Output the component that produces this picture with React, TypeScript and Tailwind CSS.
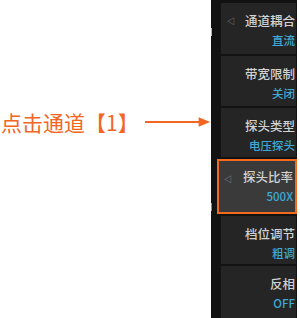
const items = [
  { title: '通道耦合', value: '直流', arrow: true, h: 'h-[51px]' },
  { title: '带宽限制', value: '关闭', arrow: false, h: 'h-[51px]' },
  { title: '探头类型', value: '电压探头', arrow: false, h: 'h-[49px]' },
  { title: '探头比率', value: '500X', arrow: true, h: 'h-[55px]', active: true },
  { title: '档位调节', value: '粗调', arrow: false, h: 'h-[49px]' },
  { title: '反相', value: 'OFF', arrow: false, h: 'h-[52px]' },
];

function MenuButton({ title, value, arrow, h, active }: (typeof items)[number]) {
  return (
    <div
      className={
        active
          ? `relative ml-[6px] w-[80px] ${h} border-2 border-[#f26a1b] bg-[#3a3a3a] pr-[1px]`
          : `relative ml-[10px] w-[75px] ${h} bg-[#252525]`
      }
    >
      {arrow && (
        <span className={`absolute top-[10px] text-[8px] leading-[16px] text-[#9a9a9a] ${active ? 'left-[5px]' : 'left-[6px]'}`}>◁</span>
      )}
      <div className={`flex flex-col items-end whitespace-nowrap pr-[1px] ${active ? 'pt-[8px]' : 'pt-[10px]'}`}>
        <span className="text-[12.5px] leading-[16px] font-medium text-[#d2d2d2]">{title}</span>
        <span className="mt-[4px] text-[11.5px] leading-[14px] font-medium text-[#3fa9d6]">{value}</span>
      </div>
    </div>
  );
}

export default function App() {
  return (
    <div
      className="flex h-[318px] w-[300px] overflow-hidden bg-white"
      style={{ fontFamily: '"Noto Sans CJK SC", "Noto Sans", sans-serif' }}
    >
      <div className="flex w-[211px] items-start pt-[108px]">
        <span className="ml-[1px] text-[21px] leading-[28px] text-[#f26522]">点击通道【1】</span>
        <svg className="mt-[6px] ml-[12px]" width="69" height="16" viewBox="0 0 69 16">
          <line x1="0" y1="8" x2="60" y2="8" stroke="#f26522" strokeWidth="2" />
          <path d="M56 3 L68 8 L56 13 Z" fill="#f26522" />
        </svg>
      </div>
      <div className="relative flex w-[86px] flex-col gap-[2px] overflow-hidden bg-[#121212] pt-[3px]">
        <span className="absolute left-0 top-[28px] h-[8px] w-[1px] bg-[#d8c21a]" />
        <span className="absolute left-0 top-[203px] h-[8px] w-[1px] bg-[#3fbf3f]" />
        {items.map((it) => (
          <MenuButton key={it.title} {...it} />
        ))}
      </div>
    </div>
  );
}
